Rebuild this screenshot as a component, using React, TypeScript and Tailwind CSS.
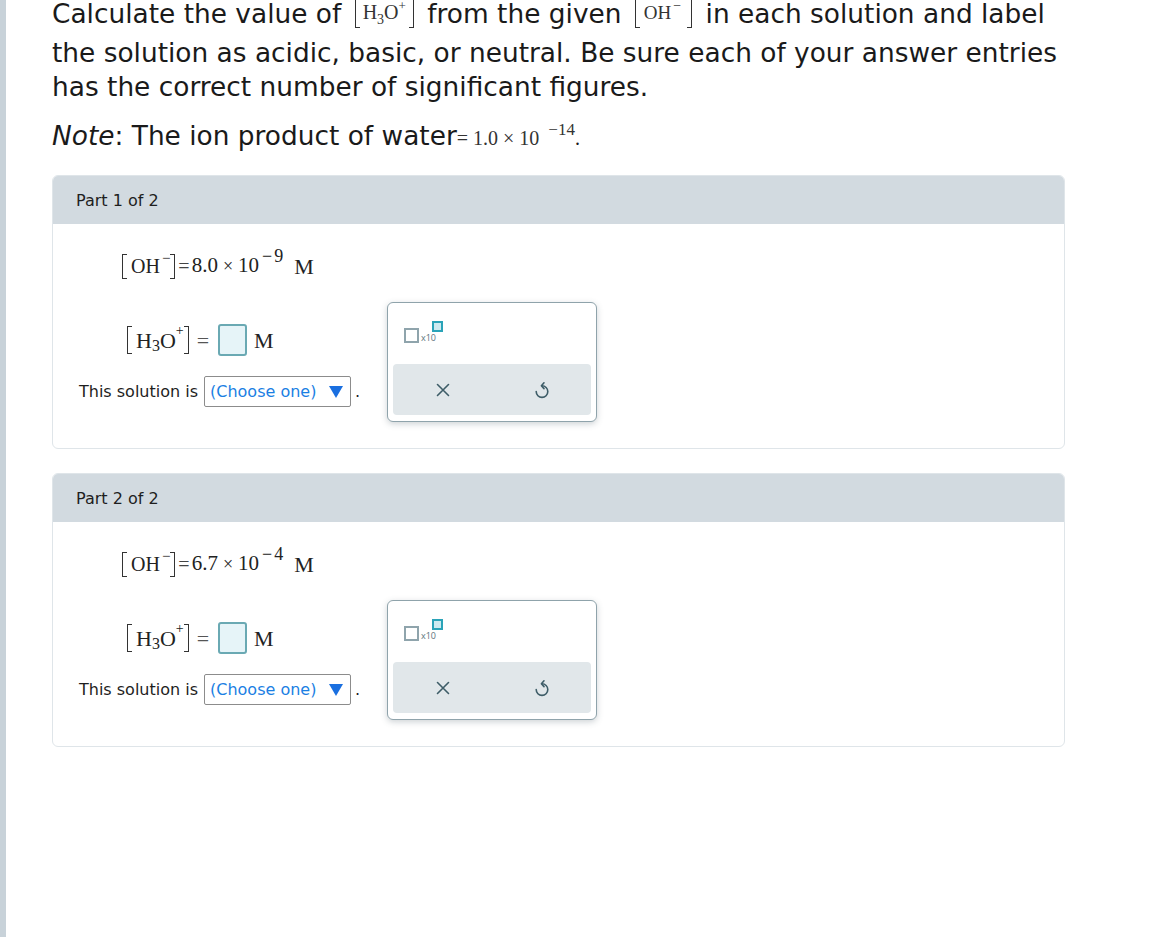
import React from "react";

function LB({ h }: { h: string }) {
  return <span className={`inline-block w-[5px] shrink-0 border-l border-t border-b border-[#333] ${h}`} />;
}
function RB({ h }: { h: string }) {
  return <span className={`inline-block w-[5px] shrink-0 border-r border-t border-b border-[#333] ${h}`} />;
}

function HeadH3O() {
  return (
    <span className="inline-flex items-center align-middle mx-[5px] my-[3px] font-['Liberation_Serif',serif] text-[20px] leading-none text-[#333] relative top-[-5px]">
      <LB h="h-[36px]" />
      <span className="px-[3px] whitespace-nowrap relative top-[2px]">
        H<span className="text-[14px] relative top-[5px]">3</span>O<span className="text-[13px] relative top-[-9px]">+</span>
      </span>
      <RB h="h-[36px]" />
    </span>
  );
}

function HeadOH() {
  return (
    <span className="inline-flex items-center align-middle mx-[5px] my-[3px] font-['Liberation_Serif',serif] text-[20px] leading-none text-[#333] relative top-[-5px]">
      <LB h="h-[36px]" />
      <span className="pl-[4px] pr-[6px] whitespace-nowrap relative top-[2px]">
        <span className="text-[19px]">OH</span><span className="text-[14px] relative top-[-9px] ml-[2px]">−</span>
      </span>
      <RB h="h-[36px]" />
    </span>
  );
}

function OHRow({ val, exp }: { val: string; exp: string }) {
  return (
    <div className="flex items-center h-[28px] ml-[43px] font-['Liberation_Serif',serif] text-[#222] whitespace-nowrap">
      <LB h="h-[25px]" />
      <span className="text-[20px] ml-[4px]">OH</span>
      <span className="text-[15px] relative top-[-8px] ml-[2px]">−</span>
      <RB h="h-[25px]" />
      <span className="text-[20px] ml-[3px] text-[#444]">=</span>
      <span className="text-[21px] ml-[2px]">{val}</span>
      <span className="text-[18px] mx-[5px]">×</span>
      <span className="text-[21px]">10</span>
      <span className="text-[18px] relative top-[-10px] ml-[3px]">−<span className="ml-[2px]">{exp}</span></span>
      <span className="text-[22px] ml-[11px]">M</span>
    </div>
  );
}

function H3ORow() {
  return (
    <div className="flex items-center h-[32px] ml-[48px] font-['Liberation_Serif',serif] text-[#222] whitespace-nowrap">
      <LB h="h-[28px]" />
      <span className="text-[22px] ml-[4px]">H</span>
      <span className="text-[16px] relative top-[6px]">3</span>
      <span className="text-[22px]">O</span>
      <span className="text-[14px] relative top-[-10px]">+</span>
      <RB h="h-[28px]" />
      <span className="text-[22px] ml-[8px] text-[#555]">=</span>
      <span className="ml-[9px] w-[29px] h-[32px] rounded-[3px] border-2 border-[#6aa9b3] bg-[#e6f4f8]" />
      <span className="text-[22px] ml-[7px]">M</span>
    </div>
  );
}

function UndoIcon() {
  return (
    <svg width="16" height="19" viewBox="0 0 16 19" fill="none" stroke="#3e5d68" strokeWidth="1.6" strokeLinecap="round" strokeLinejoin="round">
      <path d="M8 5.8 A5.8 5.8 0 1 1 2.2 11.6" />
      <path d="M10 2.8 L7.4 5.8 L10 8.6" />
    </svg>
  );
}

function ToolPanel() {
  return (
    <div className="mt-[78px] w-[210px] h-[120px] rounded-[6px] border border-[#8fa3ab] bg-white shadow-[0_2px_6px_rgba(60,80,90,0.25)] p-[5px] flex flex-col">
      <div className="relative h-[56px]">
        <span className="absolute left-[11px] top-[20px] w-[15px] h-[15px] border-2 border-[#8fa4ac]" />
        <span className="absolute left-[28px] top-[25px] text-[9px] leading-none text-[#5d747c] font-['Open_Sans',sans-serif]">x10</span>
        <span className="absolute left-[39px] top-[13px] w-[11px] h-[11px] border-2 border-[#2aa3b8] bg-[#cdeaf0]" />
      </div>
      <div className="h-[51px] rounded-[4px] bg-[#e1e7ea] flex">
        <div className="flex-1 flex items-center justify-center">
          <svg width="16" height="16" viewBox="0 0 16 16" fill="none" stroke="#3e5d68" strokeWidth="1.6" strokeLinecap="round">
            <path d="M2.5 2.5 L13.5 13.5 M13.5 2.5 L2.5 13.5" />
          </svg>
        </div>
        <div className="flex-1 flex items-center justify-center">
          <UndoIcon />
        </div>
      </div>
    </div>
  );
}

function Card({ part, val, exp }: { part: number; val: string; exp: string }) {
  return (
    <div className="w-[1013px] rounded-[6px] border border-[#dfe5e9] overflow-hidden bg-white">
      <div className="h-[48px] bg-[#d2dae0] flex items-center pl-[23px] pt-[2px] text-[16px] text-[#1e1e1e]">
        Part {part} of 2
      </div>
      <div className="h-[224px] flex">
        <div className="w-[334px] shrink-0 pl-[26px] pt-[28px] flex flex-col">
          <OHRow val={val} exp={exp} />
          <div className="mt-[44px]">
            <H3ORow />
          </div>
          <div className="mt-[20px] flex items-center h-[31px] text-[16px] text-[#1e1e1e] whitespace-nowrap">
            <span>This solution is</span>
            <span className="ml-[6px] h-[31px] w-[147px] border border-[#8c8c8c] rounded-[2px] flex items-center pl-[5px] pr-[7px] justify-between text-[#1b7fe3]">
              <span>(Choose one)</span>
              <svg width="14" height="12" viewBox="0 0 14 12">
                <path d="M0 0 H14 L7 12 Z" fill="#1a6fe0" />
              </svg>
            </span>
            <span className="ml-[4px]">.</span>
          </div>
        </div>
        <ToolPanel />
      </div>
    </div>
  );
}

export default function App() {
  return (
    <div className="min-h-[937px] flex bg-white font-['DejaVu_Sans','Verdana',sans-serif] text-[#1a1a1a]">
      <div className="w-[6px] shrink-0 bg-[#c8d2d9]" />
      <div className="ml-[46px] w-[1013px]">
        <p className="mt-[-6px] text-[26.4px] leading-[34px]">
          Calculate the value of <HeadH3O /> from the given <HeadOH /> in each solution and label the solution as acidic, basic, or neutral. Be sure each of your answer entries has the correct number of significant figures.
        </p>
        <p className="mt-[15px] text-[26.4px] leading-[34px]">
          <i>Note</i>: The ion product of water
          <span className="font-['Liberation_Serif',serif] text-[20px] text-[#333]">
            = 1.0 × 10<span className="text-[17px] relative top-[-10px] ml-[9px]">−14</span>
          </span>
          <span className="font-['Liberation_Serif',serif] text-[20px]">.</span>
        </p>
        <div className="mt-[18px]">
          <Card part={1} val="8.0" exp="9" />
        </div>
        <div className="mt-[24px]">
          <Card part={2} val="6.7" exp="4" />
        </div>
      </div>
    </div>
  );
}
